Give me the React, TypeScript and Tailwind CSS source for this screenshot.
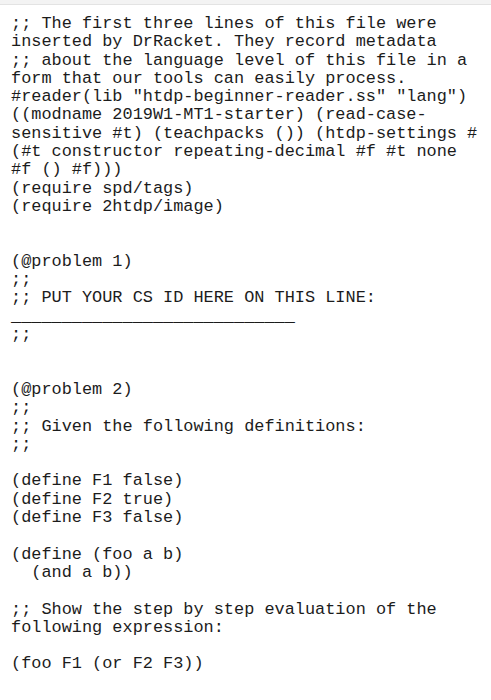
const lines = [
  ";; The first three lines of this file were",
  "inserted by DrRacket. They record metadata",
  ";; about the language level of this file in a",
  "form that our tools can easily process.",
  '#reader(lib "htdp-beginner-reader.ss" "lang")',
  "((modname 2019W1-MT1-starter) (read-case-",
  "sensitive #t) (teachpacks ()) (htdp-settings #",
  "(#t constructor repeating-decimal #f #t none",
  "#f () #f)))",
  "(require spd/tags)",
  "(require 2htdp/image)",
  "",
  "",
  "(@problem 1)",
  ";;",
  ";; PUT YOUR CS ID HERE ON THIS LINE:",
  "____________________________",
  ";;",
  "",
  "",
  "(@problem 2)",
  ";;",
  ";; Given the following definitions:",
  ";;",
  "",
  "(define F1 false)",
  "(define F2 true)",
  "(define F3 false)",
  "",
  "(define (foo a b)",
  "  (and a b))",
  "",
  ";; Show the step by step evaluation of the",
  "following expression:",
  "",
  "(foo F1 (or F2 F3))",
]

export default function App() {
  return (
    <div className="w-[491px] h-[700px] bg-white overflow-hidden">
      {/* top strip */}
      <div className="h-[5px] bg-[#f3f3f3] border-b border-[#e3e3e3]" />
      <pre className="pl-[11px] pt-[10px] m-0 text-[16.9px] leading-[18.31px] text-[#1c1c1c] whitespace-pre font-['Courier_New','Liberation_Mono',monospace]">
        {lines.map((l, i) => (
          <div key={i} className="h-[18.31px]">
            {l}
          </div>
        ))}
      </pre>
    </div>
  )
}
